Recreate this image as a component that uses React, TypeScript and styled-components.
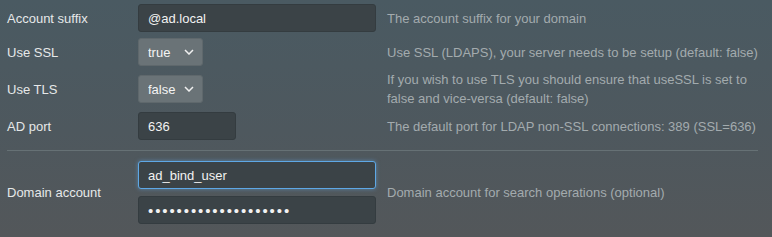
import React from 'react';
import styled, { createGlobalStyle, css } from 'styled-components';

const GlobalStyle = createGlobalStyle`
  html, body {
    margin: 0;
    padding: 0;
  }
  body {
    width: 772px;
    height: 237px;
    overflow: hidden;
    font-family: "Liberation Sans", Arial, sans-serif;
    background: linear-gradient(180deg, #4a5a62 0%, #4e585e 55%, #53575a 100%);
  }
`;

// Formulário
const Form = styled.div`
  padding: 4px 14px 0 7px;
  display: flex;
  flex-direction: column;
`;

const Row = styled.div<{ pt?: number }>`
  display: grid;
  grid-template-columns: 131px 249px 1fr;
  align-items: center;
  padding-top: ${p => p.pt ?? 0}px;
`;

const Label = styled.label`
  font-size: 13px;
  color: #e6e8e9;
`;

const Field = styled.div`
  display: flex;
  flex-direction: column;
  gap: 7px;
`;

const Help = styled.div`
  font-size: 13px;
  line-height: 19px;
  color: #a3abae;
`;

const Divider = styled.hr`
  border: none;
  border-top: 1px solid #667175;
  margin: 10px 0 10px;
  width: 751px;
`;

const TextInput = styled.input<{ w?: number; focused?: boolean }>`
  box-sizing: border-box;
  width: ${p => p.w ?? 238}px;
  height: 28px;
  padding: 0 9px;
  background: #3b4347;
  border: 1px solid #343c40;
  border-radius: 3px;
  color: #f2f2f2;
  font-family: "Liberation Sans", Arial, sans-serif;
  font-size: 13px;
  outline: none;
  caret-color: #f2f2f2;

  &[type="password"] {
    font-size: 15px;
    letter-spacing: 1.9px;
  }

  ${p => p.focused && css`
    border-color: #5ea8e6;
    box-shadow: 0 0 4px rgba(94, 168, 230, 0.55);
  `}
`;

const SelectWrap = styled.div`
  position: relative;
  width: 65px;
  height: 28px;
`;

const Select = styled.select`
  box-sizing: border-box;
  appearance: none;
  width: 100%;
  height: 100%;
  padding: 0 0 0 9px;
  background: #6a7377;
  border: 1px solid #5f686c;
  border-radius: 3px;
  color: #f4f4f4;
  font-family: "Liberation Sans", Arial, sans-serif;
  font-size: 13px;
  outline: none;
`;

const Chevron = styled.svg`
  position: absolute;
  right: 9px;
  top: 11px;
  pointer-events: none;
`;

const BoolSelect: React.FC<{ value: string }> = ({ value }) => (
  <SelectWrap>
    <Select defaultValue={value}>
      <option value="true">true</option>
      <option value="false">false</option>
    </Select>
    <Chevron width="10" height="6" viewBox="0 0 10 6">
      <path d="M1 1l4 4 4-4" fill="none" stroke="#f0f0f0" strokeWidth="1.5" />
    </Chevron>
  </SelectWrap>
);

export default function App() {
  return (
    <>
      <GlobalStyle />
      <Form>
        <Row>
          <Label>Account suffix</Label>
          <TextInput defaultValue="@ad.local" />
          <Help>The account suffix for your domain</Help>
        </Row>
        <Row pt={6}>
          <Label>Use SSL</Label>
          <BoolSelect value="true" />
          <Help>Use SSL (LDAPS), your server needs to be setup (default: false)</Help>
        </Row>
        <Row pt={4}>
          <Label>Use TLS</Label>
          <BoolSelect value="false" />
          <Help>
            If you wish to use TLS you should ensure that useSSL is set to
            <br />
            false and vice-versa (default: false)
          </Help>
        </Row>
        <Row pt={4}>
          <Label>AD port</Label>
          <TextInput w={98} defaultValue="636" />
          <Help>The default port for LDAP non-SSL connections: 389 (SSL=636)</Help>
        </Row>
        <Divider />
        <Row>
          <Label>Domain account</Label>
          <Field>
            <TextInput focused defaultValue="ad_bind_user" autoFocus />
            <TextInput type="password" defaultValue="xxxxxxxxxxxxxxxxxxxx" />
          </Field>
          <Help>Domain account for search operations (optional)</Help>
        </Row>
      </Form>
    </>
  );
}
